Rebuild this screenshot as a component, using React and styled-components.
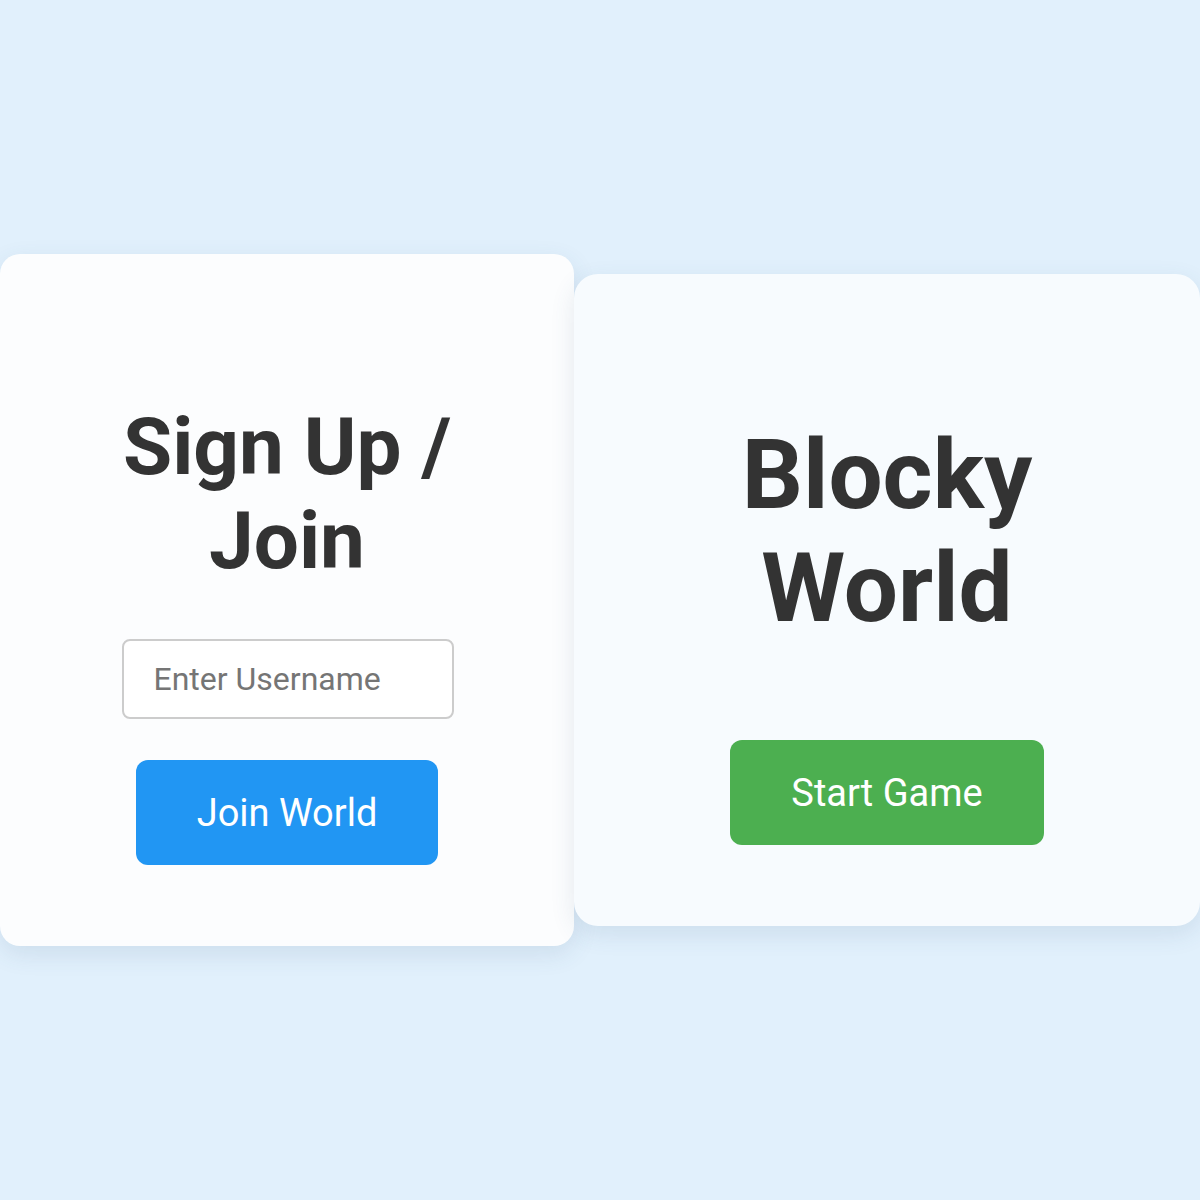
import React, { useState } from "react";
import styled, { createGlobalStyle } from "styled-components";

const GlobalStyle = createGlobalStyle`
  html, body {
    margin: 0;
    padding: 0;
    background: #e1f0fc;
    font-family: Roboto, "Liberation Sans", Arial, sans-serif;
  }
  * { box-sizing: border-box; }
`;

const Page = styled.div`
  width: 1200px;
  height: 1200px;
  display: flex;
  align-items: center;
  background: #e1f0fc;
`;

const Card = styled.section`
  width: ${(p) => p.width}px;
  padding: ${(p) => p.pad};
  background: ${(p) => p.bg};
  border-radius: ${(p) => p.radius}px;
  box-shadow: 0 8px 24px rgba(60, 90, 120, 0.12);
  display: flex;
  flex-direction: column;
  align-items: center;
  text-align: center;
`;

const Title = styled.h1`
  margin: 0;
  font-size: ${(p) => p.size}px;
  font-weight: 700;
  line-height: 1.172;
  color: #333333;
`;

const Input = styled.input`
  width: 332px;
  height: 80px;
  margin: 51px 0 0 1px;
  padding: 0 30px;
  border: 2px solid #cccccc;
  border-radius: 8px;
  background: #ffffff;
  font-family: inherit;
  font-size: 32px;
  color: #333;
  outline: none;
  &::placeholder {
    color: #757575;
  }
`;

const Button = styled.button`
  margin-top: ${(p) => p.gap}px;
  height: 105px;
  padding: 0 61px;
  border: none;
  border-radius: 12px;
  background: ${(p) => p.color};
  color: #ffffff;
  font-family: inherit;
  font-size: 38px;
  cursor: pointer;
`;

export default function App() {
  const [name, setName] = useState("");
  return (
    <>
      <GlobalStyle />
      <Page>
        <Card width={574} pad="147px 0 81px" bg="#fcfdfe" radius={20}>
          <Title size={80}>
            Sign Up /
            <br />
            Join
          </Title>
          <Input
            placeholder="Enter Username"
            value={name}
            onChange={(e) => setName(e.target.value)}
          />
          <Button gap={41} color="#2196f3">
            Join World
          </Button>
        </Card>
        <Card width={626} pad="145px 0 81px" bg="#f7fbfe" radius={24}>
          <Title size={96}>
            Blocky
            <br />
            World
          </Title>
          <Button gap={96} color="#4caf50">
            Start Game
          </Button>
        </Card>
      </Page>
    </>
  );
}
